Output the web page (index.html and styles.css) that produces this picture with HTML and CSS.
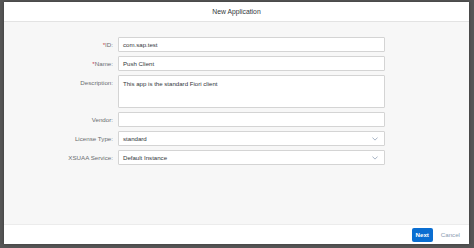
FILE: index.html
```html
<!DOCTYPE html>
<html>
<head>
<meta charset="utf-8">
<link rel="stylesheet" href="styles.css">
</head>
<body>
<div class="dialog">
  <div class="header">New Application</div>
  <div class="content">
    <div class="form">
      <div class="label"><span class="req">*</span>ID:</div>
      <div class="field">com.sap.test</div>
      <div class="label"><span class="req">*</span>Name:</div>
      <div class="field">Push Client</div>
      <div class="label">Description:</div>
      <div class="field area">This app is the standard Fiori client</div>
      <div class="label">Vendor:</div>
      <div class="field"></div>
      <div class="label">License Type:</div>
      <div class="field select">standard
        <svg class="chev" viewBox="0 0 8 5" width="6" height="4"><path d="M0.5 0.5 L4 4 L7.5 0.5" fill="none" stroke="#8a9bb0" stroke-width="1"/></svg>
      </div>
      <div class="label">XSUAA Service:</div>
      <div class="field select">Default Instance
        <svg class="chev" viewBox="0 0 8 5" width="6" height="4"><path d="M0.5 0.5 L4 4 L7.5 0.5" fill="none" stroke="#8a9bb0" stroke-width="1"/></svg>
      </div>
    </div>
  </div>
  <div class="footer">
    <div class="btn-next">Next</div>
    <div class="btn-cancel">Cancel</div>
  </div>
</div>
</body>
</html>
```

FILE: styles.css
```css
html, body {
  margin: 0;
  padding: 0;
  background: #565656;
  font-family: "Liberation Sans", Arial, sans-serif;
}
body {
  width: 474px;
  height: 248px;
  overflow: hidden;
  padding-top: 2px;
  box-sizing: border-box;
}
.dialog {
  margin-left: 4px;
  width: 465px;
  height: 242px;
  display: flex;
  flex-direction: column;
  background: #ffffff;
  box-shadow: 0 0 3px rgba(0,0,0,0.35);
}
.header {
  height: 19px;
  border-bottom: 1px solid #e3e3e3;
  display: flex;
  align-items: center;
  justify-content: center;
  font-size: 6.8px;
  color: #32363a;
  background: #fff;
}
.content {
  flex: 1;
  background: #f7f7f7;
}
.form {
  display: grid;
  grid-template-columns: 109px 267px;
  column-gap: 5px;
  row-gap: 4px;
  padding-top: 15px;
}
.label {
  height: 15px;
  display: flex;
  align-items: center;
  justify-content: flex-end;
  font-size: 6.2px;
  color: #6a6d70;
}
.req {
  color: #c0394f;
}
.field {
  position: relative;
  height: 15px;
  box-sizing: border-box;
  background: #fff;
  border: 1px solid #d4d4d4;
  border-radius: 1px;
  padding-left: 4px;
  display: flex;
  align-items: center;
  font-size: 6.1px;
  color: #32363a;
}
.field.area {
  height: 33px;
  align-items: flex-start;
  padding-top: 4px;
}
.chev {
  position: absolute;
  right: 6px;
  top: 5px;
}
.footer {
  height: 19px;
  border-top: 1px solid #ececec;
  display: flex;
  align-items: center;
  justify-content: flex-end;
  padding-right: 9px;
  background: #fff;
}
.btn-next {
  width: 21px;
  height: 14px;
  background: #0a6ed1;
  border-radius: 2px;
  color: #fff;
  font-size: 6.2px;
  font-weight: bold;
  display: flex;
  align-items: center;
  justify-content: center;
}
.btn-cancel {
  margin-left: 8px;
  font-size: 6.2px;
  color: #8a9bb0;
}
```
